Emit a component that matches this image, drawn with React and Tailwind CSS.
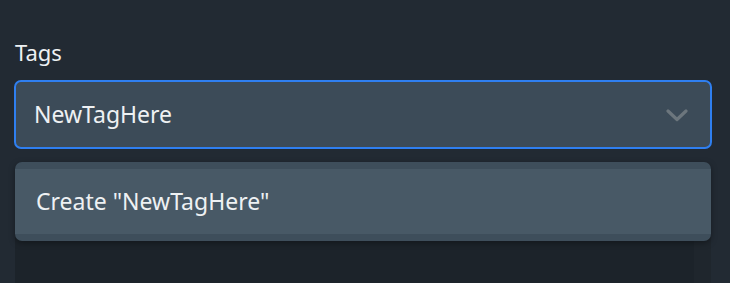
export default function App() {
  return (
    <div
      className="w-[730px] h-[283px] overflow-hidden bg-[#222a33] text-[#e8ecef]"
      style={{ fontFamily: '"Noto Sans", "Open Sans", sans-serif' }}
    >
      <div className="pt-[38px] px-[14px]">
        <label className="block pl-[1px] text-[22px] leading-[28px] text-[#eef1f3]">Tags</label>
        <div className="mt-[14px] h-[69px] w-[698px] rounded-[7px] border-2 border-[#2f7ff0] bg-[#3c4b58] flex items-center pl-[18px] pr-[22px]">
          <span className="flex-1 text-[23px] text-[#eef1f3]">NewTagHere</span>
          <svg width="22" height="13" viewBox="0 0 22 13" fill="none" className="mt-[2px]">
            <path d="M2 2 L11 10.5 L20 2" stroke="#6c767d" strokeWidth="3.2" strokeLinecap="round" strokeLinejoin="round" />
          </svg>
        </div>
        <div className="mt-[13px] ml-[1px] w-[696px] relative">
          <div className="absolute left-0 top-[40px] w-[696px] h-[200px] bg-[#1c232a] flex justify-end">
            <div className="w-[17px] h-full bg-[#1f262d]" />
          </div>
          <div className="relative rounded-[7px] bg-[#3e4e5b] py-[7px] shadow-[0_2px_6px_rgba(0,0,0,0.35)]">
            <div className="h-[65px] bg-[#485966] flex items-center pl-[21px] text-[23px] text-[#eef1f3]">
              Create "NewTagHere"
            </div>
          </div>
        </div>
      </div>
    </div>
  );
}
